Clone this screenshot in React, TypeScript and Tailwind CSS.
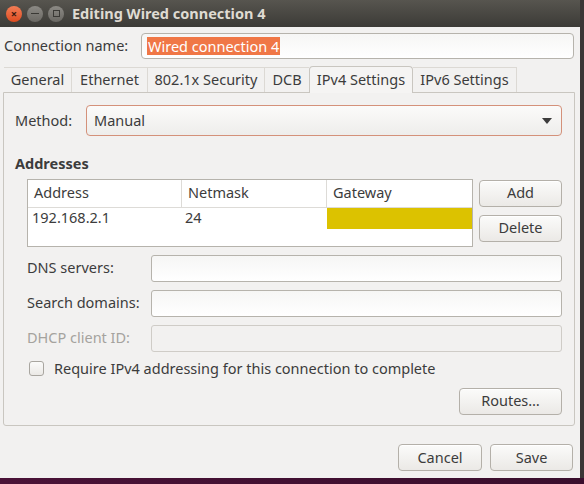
const font = { fontFamily: '"Noto Sans", "Open Sans", sans-serif' }

function Btn({ label, className }: { label: string; className: string }) {
  return (
    <button
      className={`flex items-center justify-center rounded-[4px] border border-[#b4b0a9] bg-gradient-to-b from-[#fbfbfa] to-[#ebe9e6] text-[14.5px] text-[#3c3c3c] shadow-[inset_0_1px_0_#ffffff] ${className}`}
    >
      {label}
    </button>
  )
}

function Field({ className, disabled }: { className: string; disabled?: boolean }) {
  return (
    <div
      className={`rounded-[3px] border ${disabled ? 'border-[#cfccc7] bg-[#f2f1f0]' : 'border-[#b6b3ac] bg-gradient-to-b from-[#f6f6f5] to-[#ffffff]'} ${className}`}
    />
  )
}

const tabs = ['General', 'Ethernet', '802.1x Security', 'DCB', 'IPv4 Settings', 'IPv6 Settings']
const tabW = [67, 76, 117, 45, 104, 104]

export default function App() {
  return (
    <div className="flex h-[484px] w-[584px] flex-col bg-gradient-to-r from-[#4a1237] to-[#3a0e2d]" style={font}>
      <div className="flex h-[478px]">
        <div className="flex w-[580px] flex-col bg-[#f2f1f0] text-[14.5px] text-[#3c3c3c]">
          {/* Title bar */}
          <div className="flex h-[27px] shrink-0 items-center bg-gradient-to-b from-[#57554f] to-[#3c3b37] pl-[6px]">
            <div className="flex h-[16px] w-[16px] items-center justify-center rounded-full bg-gradient-to-b from-[#f27d55] to-[#df4b1e] text-[11px] font-bold leading-none text-[#3c1a10]">
              ×
            </div>
            <div className="ml-[5px] flex h-[16px] w-[16px] items-center justify-center rounded-full bg-gradient-to-b from-[#8c8a85] to-[#6a6863]">
              <div className="h-[1.5px] w-[8px] bg-[#3a3935]" />
            </div>
            <div className="ml-[5px] flex h-[16px] w-[16px] items-center justify-center rounded-full bg-gradient-to-b from-[#8c8a85] to-[#6a6863]">
              <div className="h-[7px] w-[7px] border-[1.5px] border-[#3a3935]" />
            </div>
            <span className="ml-[8px] text-[14.5px] font-bold text-[#dfdbd2]">Editing Wired connection 4</span>
          </div>

          {/* Connection name */}
          <div className="mt-[6px] flex h-[26px] items-center">
            <span className="ml-[4px] w-[137px]">Connection name:</span>
            <div className="flex h-[26px] w-[433px] items-center rounded-[4px] border border-[#b6b3ac] bg-gradient-to-b from-[#f6f6f5] to-[#ffffff] pl-[5px]">
              <span className="bg-[#f07746] px-[1px] leading-[18px] text-white">Wired connection 4</span>
            </div>
          </div>

          {/* Tabs */}
          <div className="mt-[7px] flex h-[26px] items-end pl-[4px]">
            {tabs.map((t, i) =>
              t === 'IPv4 Settings' ? (
                <div
                  key={t}
                  style={{ width: tabW[i] }}
                  className="relative z-10 -mb-px flex h-[27px] items-center justify-center rounded-t-[4px] border border-b-0 border-[#c9c6c0] bg-[#f5f4f3]"
                >
                  {t}
                </div>
              ) : (
                <div
                  key={t}
                  style={{ width: tabW[i] }}
                  className={`flex h-[25px] items-center justify-center border-t border-[#dcd9d4] ${i === 0 || i === 5 ? '' : 'border-l'} ${i === 5 ? 'border-r' : ''}`}
                >
                  {t}
                </div>
              )
            )}
          </div>

          {/* Panel */}
          <div className="ml-[3px] flex h-[334px] w-[572px] flex-col rounded-b-[3px] border border-[#c9c6c0] bg-[#f2f1f0]">
            <div className="mt-[12px] flex h-[31px] items-center">
              <span className="ml-[11px] w-[71px]">Method:</span>
              <div className="flex h-[31px] w-[476px] items-center justify-between rounded-[4px] border border-[#d4917a] bg-gradient-to-b from-[#fbfbfa] to-[#eeedeb] pl-[7px] pr-[9px]">
                <span>Manual</span>
                <svg width="10" height="6" viewBox="0 0 10 6">
                  <path d="M0 0 L10 0 L5 6 Z" fill="#3c3c3c" />
                </svg>
              </div>
            </div>

            <div className="ml-[11px] mt-[17px] font-bold">Addresses</div>

            <div className="mt-[4px] flex">
              <div className="ml-[23px] h-[68px] w-[446px] border border-[#b6b3ac] bg-white">
                <div className="flex h-[28px] border-b border-[#dddbd7]">
                  <div className="flex w-[154px] items-center border-r border-[#dddbd7] pl-[6px]">Address</div>
                  <div className="flex w-[145px] items-center border-r border-[#dddbd7] pl-[6px]">Netmask</div>
                  <div className="flex flex-1 items-center pl-[6px]">Gateway</div>
                </div>
                <div className="flex h-[21px]">
                  <div className="flex w-[154px] items-center pl-[4px]">192.168.2.1</div>
                  <div className="flex w-[145px] items-center pl-[3px]">24</div>
                  <div className="flex-1 bg-[#dcc200]" />
                </div>
              </div>
              <div className="ml-[6px] flex flex-col">
                <Btn label="Add" className="mt-[1px] h-[27px] w-[83px]" />
                <Btn label="Delete" className="mt-[8px] h-[27px] w-[83px]" />
              </div>
            </div>

            <div className="mt-[8px] flex h-[27px] items-center">
              <span className="ml-[23px] w-[124px]">DNS servers:</span>
              <Field className="h-[27px] w-[411px]" />
            </div>
            <div className="mt-[8px] flex h-[27px] items-center">
              <span className="ml-[23px] w-[124px]">Search domains:</span>
              <Field className="h-[27px] w-[411px]" />
            </div>
            <div className="mt-[8px] flex h-[27px] items-center">
              <span className="ml-[23px] w-[124px] text-[#a5a39e]">DHCP client ID:</span>
              <Field className="h-[27px] w-[411px]" disabled />
            </div>

            <div className="mt-[6px] flex items-center">
              <div className="ml-[25px] h-[15px] w-[15px] rounded-[3px] border border-[#a9a6a0] bg-gradient-to-b from-[#fbfbfa] to-[#ebe9e6]" />
              <span className="ml-[10px]">Require IPv4 addressing for this connection to complete</span>
            </div>

            <div className="mt-[8px] flex justify-end pr-[12px]">
              <Btn label="Routes…" className="h-[27px] w-[103px]" />
            </div>
          </div>

          <div className="mt-[18px] flex justify-end gap-[8px] pr-[7px]">
            <Btn label="Cancel" className="h-[27px] w-[84px]" />
            <Btn label="Save" className="h-[27px] w-[83px]" />
          </div>
        </div>
        <div className="flex-1 bg-[#3b3535]" />
      </div>
    </div>
  )
}
